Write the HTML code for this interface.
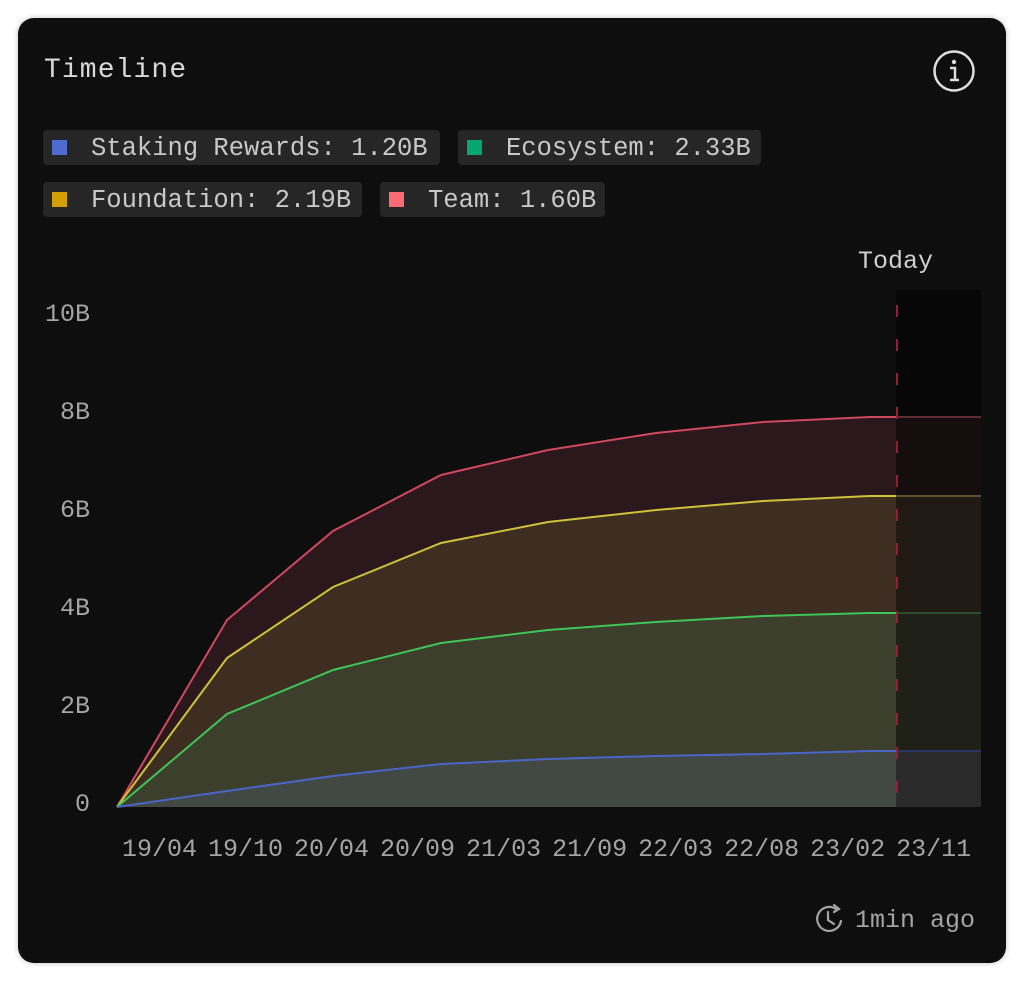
<!DOCTYPE html>
<html><head><meta charset="utf-8"><style>
body{margin:0;background:#fff;width:1024px;height:981px;position:relative;overflow:hidden;font-family:"Liberation Mono",monospace}
.card{position:absolute;left:18px;top:18px;width:988px;height:945px;background:#0e0e0e;border-radius:16px;box-shadow:0 0 6px rgba(0,0,0,.25)}
.t{position:absolute;white-space:nowrap}
.chip{position:absolute;height:35px;background:#262626;border-radius:4px;color:#c8c8c8;font-size:25.5px;line-height:37px;padding-left:48px;box-sizing:border-box}
.chip i{position:absolute;left:9px;top:10px;width:15px;height:15px}
.ax{color:#a4a4a4;font-size:25px}
</style></head><body>
<div class="card"></div>
<div class="t" style="left:44px;top:55px;color:#d8d8d8;font-size:28px;letter-spacing:1.1px">Timeline</div>
<svg style="position:absolute;left:930px;top:47px" width="48" height="48"><circle cx="24" cy="24" r="19.5" fill="none" stroke="#ddd" stroke-width="2.5"/><circle cx="24" cy="15" r="2.2" fill="#ddd"/><path d="M20 21h5v12M20 33h9" stroke="#ddd" stroke-width="2.5" fill="none"/></svg>
<div class="chip" style="left:43px;top:130px;width:397px"><i style="background:#4e6bd0"></i>Staking Rewards: 1.20B</div>
<div class="chip" style="left:458px;top:130px;width:303px"><i style="background:#07a56f"></i>Ecosystem: 2.33B</div>
<div class="chip" style="left:43px;top:182px;width:319px"><i style="background:#d29f05"></i>Foundation: 2.19B</div>
<div class="chip" style="left:380px;top:182px;width:225px"><i style="background:#fb6b75"></i>Team: 1.60B</div>
<div class="t" style="left:858px;top:247px;color:#cfcfcf;font-size:25px">Today</div>
<svg style="position:absolute;left:0;top:0" width="1024" height="981">
<rect x="896" y="290" width="85" height="517" fill="#070707"/>
<polygon points="117,807 227,620 333,531 441,475 548,450 656,433 763,422 870,417 896,417 896,807" fill="#2a181c"/>
<polygon points="117,807 227,658 333,587 441,543 548,522 656,510 763,501 870,496 896,496 896,807" fill="#3e2e22"/>
<polygon points="117,807 227,714 333,670 441,643 548,630 656,622 763,616 870,613 896,613 896,807" fill="#3c3f2b"/>
<polygon points="117,807 227,791 333,776 441,764 548,759 656,756 763,754 870,751 896,751 896,807" fill="#424944"/>
<rect x="896" y="417" width="85" height="79" fill="#160e0e"/>
<rect x="896" y="496" width="85" height="117" fill="#211914"/>
<rect x="896" y="613" width="85" height="138" fill="#1f2119"/>
<rect x="896" y="751" width="85" height="56" fill="#2a2a2a"/>
<polyline points="117,807 227,620 333,531 441,475 548,450 656,433 763,422 870,417 896,417" fill="none" stroke="#d0485e" stroke-width="2"/>
<polyline points="117,807 227,658 333,587 441,543 548,522 656,510 763,501 870,496 896,496" fill="none" stroke="#cfc03a" stroke-width="2"/>
<polyline points="117,807 227,714 333,670 441,643 548,630 656,622 763,616 870,613 896,613" fill="none" stroke="#3fc45a" stroke-width="2"/>
<polyline points="117,807 227,791 333,776 441,764 548,759 656,756 763,754 870,751 896,751" fill="none" stroke="#4a65c8" stroke-width="2"/>
<line x1="896" y1="417" x2="981" y2="417" stroke="#5a2e32" stroke-width="2"/>
<line x1="896" y1="496" x2="981" y2="496" stroke="#5e5230" stroke-width="2"/>
<line x1="896" y1="613" x2="981" y2="613" stroke="#2e4f2e" stroke-width="2"/>
<line x1="896" y1="751" x2="981" y2="751" stroke="#2a3560" stroke-width="2"/>
<line x1="897" y1="305" x2="897" y2="807" stroke="#9b1c30" stroke-width="2" stroke-dasharray="12,22"/>
<g fill="none" stroke="#a4a4a4" stroke-width="2.2" stroke-linecap="round"><path d="M836 909 A12 12 0 1 0 841 921"/><path d="M828 912v8l6 4"/><path d="M834 905l5 4-5 3"/></g>
</svg>
<div class="t ax" style="left:45px;top:300px">10B</div>
<div class="t ax" style="left:60px;top:398px">8B</div>
<div class="t ax" style="left:60px;top:496px">6B</div>
<div class="t ax" style="left:60px;top:594px">4B</div>
<div class="t ax" style="left:60px;top:692px">2B</div>
<div class="t ax" style="left:75px;top:790px">0</div>
<div class="t ax" style="left:122px;top:835px;word-spacing:-4px">19/04 19/10 20/04 20/09 21/03 21/09 22/03 22/08 23/02 23/11</div>
<div class="t ax" style="left:855px;top:906px">1min ago</div>
</body></html>
